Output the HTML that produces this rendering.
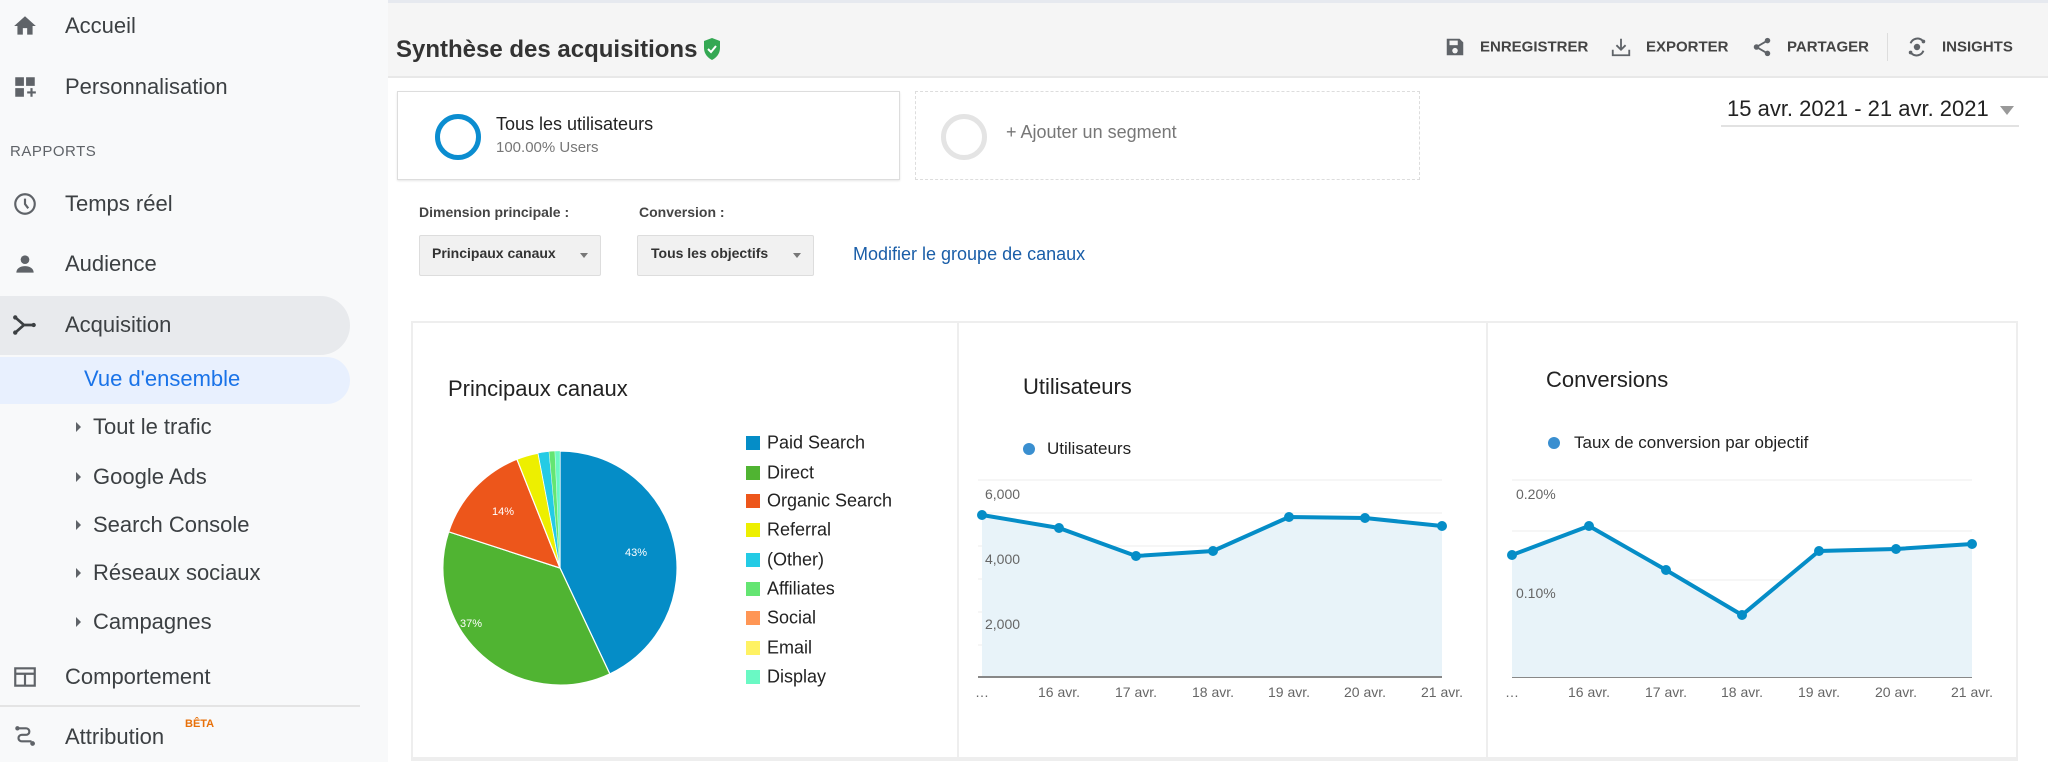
<!DOCTYPE html>
<html><head><meta charset="utf-8"><style>
*{margin:0;padding:0;box-sizing:border-box}
body{width:2048px;height:762px;overflow:hidden;background:#fff;font-family:"Liberation Sans",Arial,sans-serif;position:relative;color:#3c4043}
.a{position:absolute;white-space:nowrap}
#side{position:absolute;left:0;top:0;width:388px;height:762px;background:#f8f9fa}
.si{position:absolute;left:65px;font-size:22px;color:#3c4043;transform:translateY(-50%)}
.sub{position:absolute;left:93px;font-size:22px;color:#3c4043;transform:translateY(-50%)}
.car{position:absolute;left:76px;width:0;height:0;border-top:5px solid transparent;border-bottom:5px solid transparent;border-left:5px solid #5f6368;transform:translateY(-50%)}
.ic{position:absolute;left:12px;transform:translateY(-50%)}
.tb{position:absolute;top:47px;transform:translateY(-50%);font-size:15px;font-weight:bold;color:#444}
.lg{position:absolute;left:767px;font-size:18px;color:#222;transform:translateY(-50%)}
.sq{position:absolute;left:746px;width:14px;height:14px;transform:translateY(-50%)}
.xl{position:absolute;top:684px;font-size:14px;color:#666;transform:translateX(-50%)}
</style></head><body>
<div style="position:absolute;left:0;top:0;width:2048px;height:3px;background:#e6e9ef"></div>
<div id="side">
<svg class="ic" style="top:26px" width="26" height="26" viewBox="0 0 24 24"><path d="M10 20v-6h4v6h5v-8h3L12 3 2 12h3v8z" fill="#5f6368"/></svg>
<div class="si" style="top:26px">Accueil</div>
<svg class="ic" style="top:87px" width="26" height="26" viewBox="0 0 24 24"><path d="M3 3h8v8H3zM13 3h8v8h-8zM3 13h8v8H3zM17 13h2v3h3v2h-3v3h-2v-3h-3v-2h3z" fill="#5f6368"/></svg>
<div class="si" style="top:87px">Personnalisation</div>
<div class="a" style="left:10px;top:143px;font-size:15px;color:#5f6368;letter-spacing:.5px">RAPPORTS</div>
<svg class="ic" style="top:204px" width="26" height="26" viewBox="0 0 24 24"><circle cx="12" cy="12" r="9" fill="none" stroke="#5f6368" stroke-width="2"/><path d="M12 7v5l3 4" fill="none" stroke="#5f6368" stroke-width="2"/></svg>
<div class="si" style="top:204px">Temps réel</div>
<svg class="ic" style="top:264px" width="26" height="26" viewBox="0 0 24 24"><circle cx="12" cy="8" r="4" fill="#5f6368"/><path d="M4 20c0-4 4-6 8-6s8 2 8 6z" fill="#5f6368"/></svg>
<div class="si" style="top:264px">Audience</div>
<div style="position:absolute;left:0;top:296px;width:350px;height:59px;background:#e8eaed;border-radius:0 30px 30px 0"></div>
<svg class="ic" style="top:325px" width="26" height="26" viewBox="0 0 24 24"><path d="M3 5l8 7-8 7M11 12h10" fill="none" stroke="#3c4043" stroke-width="2.5"/><circle cx="3" cy="5" r="2" fill="#3c4043"/><circle cx="3" cy="19" r="2" fill="#3c4043"/><circle cx="20" cy="12" r="2" fill="#3c4043"/></svg>
<div class="si" style="top:325px">Acquisition</div>
<div style="position:absolute;left:0;top:357px;width:350px;height:47px;background:#e8f0fe;border-radius:0 24px 24px 0"></div>
<div class="a" style="left:84px;top:379px;transform:translateY(-50%);font-size:22px;color:#1a73e8">Vue d'ensemble</div>
<div class="car" style="top:427px"></div><div class="sub" style="top:427px">Tout le trafic</div>
<div class="car" style="top:477px"></div><div class="sub" style="top:477px">Google Ads</div>
<div class="car" style="top:525px"></div><div class="sub" style="top:525px">Search Console</div>
<div class="car" style="top:573px"></div><div class="sub" style="top:573px">Réseaux sociaux</div>
<div class="car" style="top:622px"></div><div class="sub" style="top:622px">Campagnes</div>
<svg class="ic" style="top:677px" width="26" height="26" viewBox="0 0 24 24"><rect x="3" y="4" width="18" height="16" fill="none" stroke="#5f6368" stroke-width="2"/><path d="M3 9h18M12 9v11" stroke="#5f6368" stroke-width="2"/></svg>
<div class="si" style="top:677px">Comportement</div>
<div style="position:absolute;left:0;top:705px;width:360px;height:2px;background:#e4e4e4"></div>
<svg class="ic" style="top:737px" width="26" height="26" viewBox="0 0 24 24"><path d="M5 4h8a3 3 0 0 1 0 6H9a3 3 0 0 0 0 6h9" fill="none" stroke="#5f6368" stroke-width="2"/><circle cx="5" cy="4" r="2" fill="#5f6368"/><circle cx="19" cy="18" r="2.2" fill="#5f6368"/></svg>
<div class="si" style="top:737px">Attribution</div>
<div class="a" style="left:185px;top:718px;font-size:11px;font-weight:bold;color:#e8710a">BÊTA</div>
</div>
<div style="position:absolute;left:388px;top:3px;width:1660px;height:75px;background:#f5f5f5;border-bottom:2px solid #e8e8e8"></div>
<div class="a" style="left:396px;top:36px;font-size:24px;font-weight:bold;color:#333">Synthèse des acquisitions</div>
<svg class="a" style="left:702px;top:37px" width="20" height="24" viewBox="0 0 20 24"><path d="M10 1l8 3v7c0 6-4 10-8 12C6 21 2 17 2 11V4z" fill="#34a853"/><path d="M6 12l3 3 5-6" fill="none" stroke="#fff" stroke-width="2"/></svg>
<svg class="a" style="left:1444px;top:36px" width="22" height="22" viewBox="0 0 24 24"><path d="M3 3h14l4 4v14H3z" fill="#5f6368"/><rect x="6" y="5" width="9" height="5" fill="#f5f5f5"/><circle cx="12" cy="16" r="3" fill="#f5f5f5"/></svg>
<div class="tb" style="left:1480px">ENREGISTRER</div>
<svg class="a" style="left:1610px;top:36px" width="22" height="22" viewBox="0 0 24 24"><path d="M12 3v12M7 10l5 5 5-5M3 15v6h18v-6" fill="none" stroke="#5f6368" stroke-width="2"/></svg>
<div class="tb" style="left:1646px">EXPORTER</div>
<svg class="a" style="left:1751px;top:36px" width="22" height="22" viewBox="0 0 24 24"><path d="M18 5L6 12l12 7" fill="none" stroke="#5f6368" stroke-width="2"/><circle cx="18" cy="5" r="3" fill="#5f6368"/><circle cx="6" cy="12" r="3" fill="#5f6368"/><circle cx="18" cy="19" r="3" fill="#5f6368"/></svg>
<div class="tb" style="left:1787px">PARTAGER</div>
<div style="position:absolute;left:1887px;top:33px;width:1px;height:28px;background:#ddd"></div>
<svg class="a" style="left:1906px;top:36px" width="22" height="22" viewBox="0 0 24 24"><path d="M5 8a8 8 0 0 1 13-3M19 16a8 8 0 0 1-13 3" fill="none" stroke="#5f6368" stroke-width="2.2"/><circle cx="12" cy="12" r="3.5" fill="#5f6368"/><circle cx="19" cy="6" r="2" fill="#5f6368"/><circle cx="5" cy="18" r="2" fill="#5f6368"/></svg>
<div class="tb" style="left:1942px">INSIGHTS</div>

<div style="position:absolute;left:397px;top:91px;width:503px;height:89px;border:1px solid #ddd;box-shadow:0 1px 2px rgba(0,0,0,.1);background:#fff"></div>
<div style="position:absolute;left:435px;top:114px;width:46px;height:46px;border:5px solid #0b8dd0;border-radius:50%"></div>
<div class="a" style="left:496px;top:114px;font-size:18px;color:#222">Tous les utilisateurs</div>
<div class="a" style="left:496px;top:139px;font-size:15px;color:#777">100.00% Users</div>
<div style="position:absolute;left:915px;top:91px;width:505px;height:89px;border:1px dashed #ddd"></div>
<div style="position:absolute;left:941px;top:114px;width:46px;height:46px;border:5px solid #e4e4e4;border-radius:50%"></div>
<div class="a" style="left:1006px;top:122px;font-size:18px;color:#777">+ Ajouter un segment</div>
<div class="a" style="left:1727px;top:96px;font-size:22px;color:#222">15 avr. 2021 - 21 avr. 2021</div>
<div style="position:absolute;left:2000px;top:106px;border-left:7px solid transparent;border-right:7px solid transparent;border-top:9px solid #999"></div>
<div style="position:absolute;left:1721px;top:125px;width:298px;height:2px;background:#e2e2e2"></div>

<div class="a" style="left:419px;top:204px;font-size:14px;font-weight:bold;color:#444">Dimension principale :</div>
<div class="a" style="left:639px;top:204px;font-size:14px;font-weight:bold;color:#444">Conversion :</div>
<div style="position:absolute;left:419px;top:235px;width:182px;height:41px;background:#f1f1f1;border:1px solid #ddd;border-radius:2px"></div>
<div class="a" style="left:432px;top:245px;font-size:14px;font-weight:bold;color:#333">Principaux canaux</div>
<div style="position:absolute;left:580px;top:253px;border-left:4px solid transparent;border-right:4px solid transparent;border-top:5px solid #777"></div>
<div style="position:absolute;left:637px;top:235px;width:177px;height:41px;background:#f1f1f1;border:1px solid #ddd;border-radius:2px"></div>
<div class="a" style="left:651px;top:245px;font-size:14px;font-weight:bold;color:#333">Tous les objectifs</div>
<div style="position:absolute;left:793px;top:253px;border-left:4px solid transparent;border-right:4px solid transparent;border-top:5px solid #777"></div>
<div class="a" style="left:853px;top:244px;font-size:18px;color:#1a5ea8">Modifier le groupe de canaux</div>

<div style="position:absolute;left:411px;top:321px;width:1607px;height:440px;border:2px solid #eee;border-bottom-width:4px"></div>
<div style="position:absolute;left:957px;top:321px;width:2px;height:440px;background:#eee"></div>
<div style="position:absolute;left:1486px;top:321px;width:2px;height:440px;background:#eee"></div>

<div class="a" style="left:448px;top:376px;font-size:22px;color:#222">Principaux canaux</div>
<svg class="a" style="left:0;top:0" width="2048" height="762">
<g stroke="#fff" stroke-width="1.2">
<path d="M560 568L560 451A117 117 0 0 1 609.8 673.9Z" fill="#058dc7"/>
<path d="M560 568L609.8 673.9A117 117 0 0 1 448.7 531.8Z" fill="#50b432"/>
<path d="M560 568L448.7 531.8A117 117 0 0 1 516.9 459.2Z" fill="#ed561b"/>
<path d="M560 568L516.9 459.2A117 117 0 0 1 538.1 453.1Z" fill="#edef00"/>
<path d="M560 568L538.1 453.1A117 117 0 0 1 549 451.5Z" fill="#24cbe5" stroke-width=".5"/>
<path d="M560 568L549 451.5A117 117 0 0 1 554.9 451.1Z" fill="#64e572" stroke-width=".3"/>
<path d="M560 568L554.9 451.1A117 117 0 0 1 560 451Z" fill="#6af9c4" stroke-width=".3"/>
</g>
<g font-family="Liberation Sans" font-size="11" fill="#fff" text-anchor="middle">
<text x="636" y="556">43%</text><text x="471" y="627">37%</text><text x="503" y="515">14%</text></g>
<g stroke="#eee" stroke-width="1"><path d="M978 480H1442M978 513H1442M978 546H1442M978 579H1442M978 612H1442M978 645H1442M1512 480H1972M1512 531H1972M1512 580H1972M1512 628H1972"/></g>
<path d="M982 515L1059 528L1136 556L1213 551L1289 517L1365 518L1442 526L1442 677L982 677Z" fill="#e8f3f9"/>
<path d="M978 677H1442M1512 677H1972" stroke="#888" stroke-width="2"/>
<path d="M982 515L1059 528L1136 556L1213 551L1289 517L1365 518L1442 526" fill="none" stroke="#058dc7" stroke-width="4"/>
<g fill="#058dc7"><circle cx="982" cy="515" r="5"/><circle cx="1059" cy="528" r="5"/><circle cx="1136" cy="556" r="5"/><circle cx="1213" cy="551" r="5"/><circle cx="1289" cy="517" r="5"/><circle cx="1365" cy="518" r="5"/><circle cx="1442" cy="526" r="5"/></g>
<path d="M1512 555L1589 526L1666 570L1742 615L1819 551L1896 549L1972 544L1972 677L1512 677Z" fill="#e8f3f9"/>
<path d="M1512 555L1589 526L1666 570L1742 615L1819 551L1896 549L1972 544" fill="none" stroke="#058dc7" stroke-width="4"/>
<g fill="#058dc7"><circle cx="1512" cy="555" r="5"/><circle cx="1589" cy="526" r="5"/><circle cx="1666" cy="570" r="5"/><circle cx="1742" cy="615" r="5"/><circle cx="1819" cy="551" r="5"/><circle cx="1896" cy="549" r="5"/><circle cx="1972" cy="544" r="5"/></g>
<g font-family="Liberation Sans" font-size="14" fill="#666"><text x="985" y="499">6,000</text><text x="985" y="564">4,000</text><text x="985" y="629">2,000</text><text x="1516" y="499">0.20%</text><text x="1516" y="598">0.10%</text></g>
<circle cx="1029" cy="449" r="6" fill="#3a8fd0"/><circle cx="1554" cy="443" r="6" fill="#3a8fd0"/>
</svg>
<div class="sq" style="top:443px;background:#058dc7"></div><div class="lg" style="top:443px">Paid Search</div>
<div class="sq" style="top:473px;background:#50b432"></div><div class="lg" style="top:473px">Direct</div>
<div class="sq" style="top:501px;background:#ed561b"></div><div class="lg" style="top:501px">Organic Search</div>
<div class="sq" style="top:530px;background:#edef00"></div><div class="lg" style="top:530px">Referral</div>
<div class="sq" style="top:560px;background:#24cbe5"></div><div class="lg" style="top:560px">(Other)</div>
<div class="sq" style="top:589px;background:#64e572"></div><div class="lg" style="top:589px">Affiliates</div>
<div class="sq" style="top:618px;background:#ff9655"></div><div class="lg" style="top:618px">Social</div>
<div class="sq" style="top:648px;background:#fff263"></div><div class="lg" style="top:648px">Email</div>
<div class="sq" style="top:677px;background:#6af9c4"></div><div class="lg" style="top:677px">Display</div>

<div class="a" style="left:1023px;top:374px;font-size:22px;color:#222">Utilisateurs</div>
<div class="a" style="left:1047px;top:439px;font-size:17px;color:#222">Utilisateurs</div>
<div class="a" style="left:1546px;top:367px;font-size:22px;color:#222">Conversions</div>
<div class="a" style="left:1574px;top:433px;font-size:17px;color:#222">Taux de conversion par objectif</div>
<div class="xl" style="left:982px">…</div><div class="xl" style="left:1059px">16 avr.</div><div class="xl" style="left:1136px">17 avr.</div><div class="xl" style="left:1213px">18 avr.</div><div class="xl" style="left:1289px">19 avr.</div><div class="xl" style="left:1365px">20 avr.</div><div class="xl" style="left:1442px">21 avr.</div>
<div class="xl" style="left:1512px">…</div><div class="xl" style="left:1589px">16 avr.</div><div class="xl" style="left:1666px">17 avr.</div><div class="xl" style="left:1742px">18 avr.</div><div class="xl" style="left:1819px">19 avr.</div><div class="xl" style="left:1896px">20 avr.</div><div class="xl" style="left:1972px">21 avr.</div>
</body></html>
